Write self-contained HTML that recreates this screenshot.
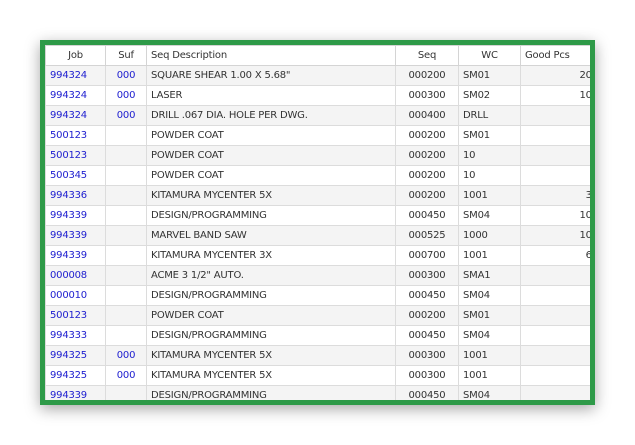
<!DOCTYPE html>
<html><head><meta charset="utf-8"><style>
html,body{margin:0;padding:0;background:#fff;width:635px;height:445px;overflow:hidden}
.frame{position:absolute;left:40px;top:40px;width:545px;height:355px;border:5px solid #2e9a48;box-shadow:0 4px 14px rgba(0,0,0,.35);background:#fff;overflow:hidden}
table{border-collapse:collapse;table-layout:fixed;width:557px;font-family:"DejaVu Sans","Liberation Sans",sans-serif;font-size:10px;color:#333;position:absolute;left:0;top:0}
td,th{height:19px;padding:0 4px;border:1px solid #dcdcdc;white-space:nowrap;overflow:hidden;font-weight:normal;letter-spacing:-0.2px}
th{background:#fff;color:#333;text-align:center;border-color:#d4d4d4}
th.l{text-align:left}
tr:nth-child(odd) td{background:#f4f4f4}
tr:nth-child(even) td{background:#fff}
td.j{color:#2020d0}
td.s{color:#2020d0;text-align:center}
td.c{text-align:center}
td.r{text-align:right;padding-right:4px}
</style></head><body>
<div class="frame">
<table>
<colgroup><col style="width:60px"><col style="width:41px"><col style="width:249px"><col style="width:63px"><col style="width:62px"><col style="width:82px"></colgroup>
<thead><tr><th>Job</th><th>Suf</th><th class="l">Seq Description</th><th>Seq</th><th>WC</th><th class="l">Good Pcs</th></tr></thead>
<tbody>
<tr><td class="j">994324</td><td class="s">000</td><td>SQUARE SHEAR 1.00 X 5.68"</td><td class="c">000200</td><td>SM01</td><td class="r">200</td></tr>
<tr><td class="j">994324</td><td class="s">000</td><td>LASER</td><td class="c">000300</td><td>SM02</td><td class="r">100</td></tr>
<tr><td class="j">994324</td><td class="s">000</td><td>DRILL .067 DIA. HOLE PER DWG.</td><td class="c">000400</td><td>DRLL</td><td class="r"></td></tr>
<tr><td class="j">500123</td><td></td><td>POWDER COAT</td><td class="c">000200</td><td>SM01</td><td></td></tr>
<tr><td class="j">500123</td><td></td><td>POWDER COAT</td><td class="c">000200</td><td>10</td><td></td></tr>
<tr><td class="j">500345</td><td></td><td>POWDER COAT</td><td class="c">000200</td><td>10</td><td></td></tr>
<tr><td class="j">994336</td><td></td><td>KITAMURA MYCENTER 5X</td><td class="c">000200</td><td>1001</td><td class="r">30</td></tr>
<tr><td class="j">994339</td><td></td><td>DESIGN/PROGRAMMING</td><td class="c">000450</td><td>SM04</td><td class="r">100</td></tr>
<tr><td class="j">994339</td><td></td><td>MARVEL BAND SAW</td><td class="c">000525</td><td>1000</td><td class="r">100</td></tr>
<tr><td class="j">994339</td><td></td><td>KITAMURA MYCENTER 3X</td><td class="c">000700</td><td>1001</td><td class="r">60</td></tr>
<tr><td class="j">000008</td><td></td><td>ACME 3 1/2" AUTO.</td><td class="c">000300</td><td>SMA1</td><td></td></tr>
<tr><td class="j">000010</td><td></td><td>DESIGN/PROGRAMMING</td><td class="c">000450</td><td>SM04</td><td></td></tr>
<tr><td class="j">500123</td><td></td><td>POWDER COAT</td><td class="c">000200</td><td>SM01</td><td></td></tr>
<tr><td class="j">994333</td><td></td><td>DESIGN/PROGRAMMING</td><td class="c">000450</td><td>SM04</td><td></td></tr>
<tr><td class="j">994325</td><td class="s">000</td><td>KITAMURA MYCENTER 5X</td><td class="c">000300</td><td>1001</td><td></td></tr>
<tr><td class="j">994325</td><td class="s">000</td><td>KITAMURA MYCENTER 5X</td><td class="c">000300</td><td>1001</td><td></td></tr>
<tr><td class="j">994339</td><td></td><td>DESIGN/PROGRAMMING</td><td class="c">000450</td><td>SM04</td><td></td></tr>
</tbody></table>
</div>
</body></html>
